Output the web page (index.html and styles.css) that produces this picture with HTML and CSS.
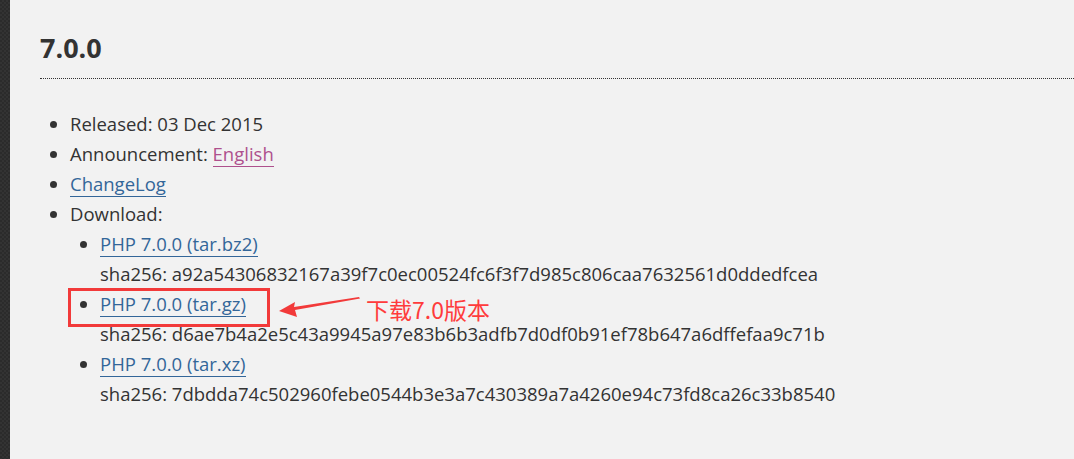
FILE: index.html
```html
<!DOCTYPE html>
<html lang="en">
<head>
<meta charset="utf-8">
<title>PHP 7.0.0</title>
<link rel="stylesheet" href="styles.css">
</head>
<body>
<div class="page">
  <div class="strip"></div>
  <main class="content">
    <h2 class="version">7.0.0</h2>
    <ul class="info">
      <li>Released: 03 Dec 2015</li>
      <li>Announcement: <a class="link visited" href="#">English</a></li>
      <li><a class="link" href="#">ChangeLog</a></li>
      <li>Download:
        <ul class="downloads">
          <li><a class="link" href="#">PHP 7.0.0 (tar.bz2)</a><br>sha256: a92a54306832167a39f7c0ec00524fc6f3f7d985c806caa7632561d0ddedfcea</li>
          <li class="marked"><a class="link" href="#">PHP 7.0.0 (tar.gz)</a><br>sha256: d6ae7b4a2e5c43a9945a97e83b6b3adfb7d0df0b91ef78b647a6dffefaa9c71b
            <span class="mark-box"></span>
            <svg class="mark-arrow" width="84" height="20" viewBox="0 0 84 20"><path d="M0 14 L16 5 L15 10 L80 0 L81 1.5 L16 13 L18 20 Z" fill="#f23a3a"/></svg>
            <span class="mark-label">下载7.0版本</span>
          </li>
          <li><a class="link" href="#">PHP 7.0.0 (tar.xz)</a><br>sha256: 7dbdda74c502960febe0544b3e3a7c430389a7a4260e94c73fd8ca26c33b8540</li>
        </ul>
      </li>
    </ul>
  </main>
</div>
</body>
</html>
```

FILE: styles.css
```css
html, body {
  margin: 0;
  padding: 0;
  height: 100%;
}
body {
  background: #f2f2f2;
  color: #333;
  font-family: "Open Sans", "Noto Sans", sans-serif;
  font-size: 18.5px;
  overflow: hidden;
}
.page {
  display: flex;
  min-height: 100%;
}
.strip {
  width: 10px;
  flex: none;
  background-color: #2b2b2b;
  background-image:
    linear-gradient(45deg, #333 25%, transparent 25%, transparent 75%, #333 75%),
    linear-gradient(45deg, #333 25%, transparent 25%, transparent 75%, #333 75%);
  background-size: 4px 4px;
  background-position: 0 0, 2px 2px;
}
.content {
  flex: 1;
  padding: 28px 0 0 30px;
}
.version {
  margin: 0 -20px 0 0;
  font-size: 27px;
  font-weight: 700;
  line-height: 40px;
  padding-bottom: 10px;
  border-bottom: 1px dotted #333;
  color: #333;
}
.info {
  margin: 30px 0 0 0;
  padding-left: 30px;
  line-height: 30px;
  list-style: disc;
}
.downloads {
  margin: 0;
  padding-left: 30px;
  list-style: disc;
}
.link {
  color: #336699;
  text-decoration: none;
  border-bottom: 1px solid #336699;
}
.link.visited {
  color: #ae508d;
  border-bottom-color: #ae508d;
}
.marked {
  position: relative;
}
.mark-box {
  position: absolute;
  left: -32px;
  top: -1px;
  width: 196px;
  height: 33px;
  border: 3px solid #f23a3a;
}
.mark-arrow {
  position: absolute;
  left: 179px;
  top: 8px;
}
.mark-label {
  position: absolute;
  left: 266px;
  top: 9px;
  color: #ff3b3b;
  font-family: "Noto Sans CJK SC", sans-serif;
  font-size: 23px;
  line-height: 22px;
  white-space: nowrap;
}
```
